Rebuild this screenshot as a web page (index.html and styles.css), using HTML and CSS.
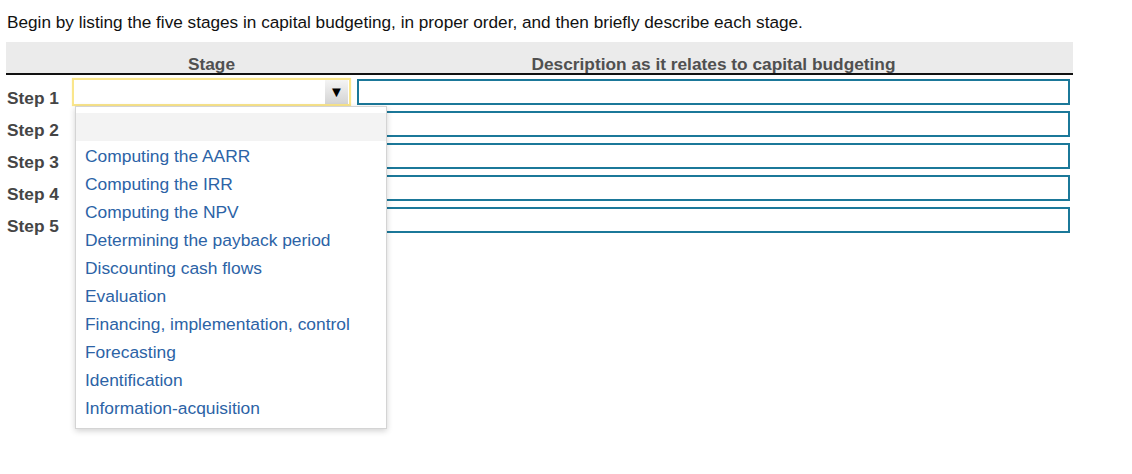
FILE: index.html
```
<html>
<head>
    <title>Capital budgeting</title>
    <link rel="stylesheet" href="styles.css">
</head>
<body>
    <p class="pergunta">Begin by listing the five stages in capital budgeting, in proper order, and then briefly describe each stage.</p>

    <div class="tabela">
        <div class="cabecalho">
            <div></div>
            <div class="titulo">Stage</div>
            <div class="titulo">Description as it relates to capital budgeting</div>
        </div>

        <div class="linha">
            <div class="rotulo">Step 1</div>
            <div class="celula">
                <div class="escolha aberta">
                    <span class="seta">&#9660;</span>
                </div>
                <ul class="lista">
                    <li class="vazio"></li>
                    <li>Computing the AARR</li>
                    <li>Computing the IRR</li>
                    <li>Computing the NPV</li>
                    <li>Determining the payback period</li>
                    <li>Discounting cash flows</li>
                    <li>Evaluation</li>
                    <li>Financing, implementation, control</li>
                    <li>Forecasting</li>
                    <li>Identification</li>
                    <li>Information-acquisition</li>
                </ul>
            </div>
            <input type="text" class="descricao">
        </div>
        <div class="linha">
            <div class="rotulo">Step 2</div>
            <div class="celula"><div class="escolha"><span class="seta">&#9660;</span></div></div>
            <input type="text" class="descricao">
        </div>
        <div class="linha">
            <div class="rotulo">Step 3</div>
            <div class="celula"><div class="escolha"><span class="seta">&#9660;</span></div></div>
            <input type="text" class="descricao">
        </div>
        <div class="linha">
            <div class="rotulo">Step 4</div>
            <div class="celula"><div class="escolha"><span class="seta">&#9660;</span></div></div>
            <input type="text" class="descricao">
        </div>
        <div class="linha">
            <div class="rotulo">Step 5</div>
            <div class="celula"><div class="escolha"><span class="seta">&#9660;</span></div></div>
            <input type="text" class="descricao">
        </div>
    </div>
</body>
</html>
```

FILE: styles.css
```
body {
    margin: 0;
    padding: 0 6px;
    background-color: white;
    font-family: "Liberation Sans", Arial, sans-serif;
}

.pergunta {
    margin: 12px 0 0 1px;
    font-size: 17.2px;
    line-height: 20px;
    color: #111;
}

.tabela {
    width: 1067px;
    margin-top: 10px;
}

.cabecalho {
    display: grid;
    grid-template-columns: 60px 279px 713px;
    column-gap: 6px;
    height: 31px;
    background-color: #ebebeb;
    border-bottom: 2px solid #111;
}

.titulo {
    align-self: end;
    text-align: center;
    font-size: 17.3px;
    font-weight: bold;
    line-height: 18px;
    color: #505050;
}

.linha {
    display: grid;
    grid-template-columns: 60px 279px 713px;
    column-gap: 6px;
    height: 32px;
    align-items: start;
}

.rotulo {
    padding: 13px 0 0 1px;
    font-size: 17.3px;
    font-weight: bold;
    line-height: 20px;
    color: #454545;
}

.celula {
    position: relative;
}

.escolha {
    display: none;
}

.escolha.aberta {
    display: flex;
    justify-content: flex-end;
    box-sizing: border-box;
    height: 28px;
    margin-top: 3px;
    padding: 0 1px 0 0;
    border: 2px solid #fae68c;
    box-shadow: 0 0 1px #fbe9a0;
    background-color: white;
}

.seta {
    width: 23px;
    height: 24px;
    font-size: 15px;
    line-height: 24px;
    text-align: center;
    color: #000;
    background: linear-gradient(#f4f4f4, #d4d4d4);
}

.descricao {
    box-sizing: border-box;
    height: 26px;
    width: 713px;
    margin: 4px 0 0 0;
    border: 2px solid #1b7899;
    background-color: white;
    padding: 0 4px;
}

.lista {
    position: absolute;
    left: 3px;
    top: 31px;
    width: 312px;
    box-sizing: border-box;
    margin: 0;
    padding: 6px 0 7px 0;
    list-style: none;
    background-color: white;
    border: 1px solid #d4d4d4;
    box-shadow: 0 2px 6px rgba(0, 0, 0, 0.18);
    z-index: 2;
}

.lista li {
    height: 28px;
    line-height: 30px;
    padding-left: 9px;
    font-size: 17.4px;
    color: #2c63a6;
    white-space: nowrap;
}

.lista li.vazio {
    background-color: #f3f3f3;
}
```
